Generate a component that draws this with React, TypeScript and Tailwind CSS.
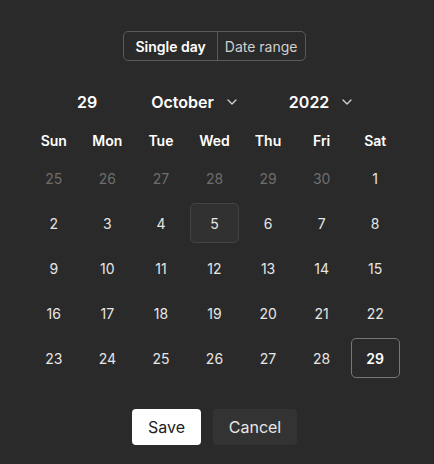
import React from "react";

const dayNames = ["Sun", "Mon", "Tue", "Wed", "Thu", "Fri", "Sat"];

const days: { n: number; muted?: boolean }[] = [
  { n: 25, muted: true },
  { n: 26, muted: true },
  { n: 27, muted: true },
  { n: 28, muted: true },
  { n: 29, muted: true },
  { n: 30, muted: true },
  ...Array.from({ length: 29 }, (_, i) => ({ n: i + 1 })),
];

const Chevron = () => (
  <svg width="10" height="6" viewBox="0 0 10 6" fill="none" className="text-[#d4d4d4]">
    <path d="M1 1l4 4 4-4" stroke="currentColor" strokeWidth="1.3" strokeLinecap="round" strokeLinejoin="round" />
  </svg>
);

const App = () => {
  return (
    <div
      className="w-[434px] h-[464px] bg-[#2a2a2a] pt-[31px] text-[#ececec]"
      style={{ fontFamily: "Inter, 'Noto Sans', sans-serif" }}
    >
      <div className="ml-[27px] w-[375px] flex flex-col">
        {/* mode toggle */}
        <div className="flex justify-center">
          <div className="flex h-[30px] rounded-[5px] border border-[#5a5a5a] text-[14px] overflow-hidden">
            <button className="px-[11px] font-semibold text-white border-r border-[#5a5a5a]">
              Single day
            </button>
            <button className="px-[7px] text-[#d0d0d0]">Date range</button>
          </div>
        </div>

        {/* day / month / year */}
        <div className="mt-[29px] h-6 flex items-center text-[16px] font-semibold text-white">
          <span className="ml-[50px]">29</span>
          <span className="ml-[54px] flex items-center gap-[13px]">
            October <Chevron />
          </span>
          <span className="ml-[52px] flex items-center gap-[13px]">
            2022 <Chevron />
          </span>
        </div>

        {/* weekday names */}
        <div className="mt-[16px] grid grid-cols-7 h-5 items-center text-[14px] font-semibold text-white">
          {dayNames.map((d) => (
            <span key={d} className="text-center">
              {d}
            </span>
          ))}
        </div>

        {/* days */}
        <div className="mt-[8px] grid grid-cols-7 gap-y-[5px] text-[14px]">
          {days.map((d, i) => {
            const isToday = !d.muted && d.n === 5;
            const isSelected = !d.muted && d.n === 29;
            return (
              <div key={i} className="flex justify-center">
                <div
                  className={`w-[49px] h-[40px] flex items-center justify-center rounded-[5px] ${
                    d.muted
                      ? "text-[#6e6e6e]"
                      : isSelected
                      ? "border border-[#777] font-semibold text-white"
                      : isToday
                      ? "bg-[#313131] border border-[#434343] text-[#e6e6e6]"
                      : "text-[#e6e6e6]"
                  }`}
                >
                  {d.n}
                </div>
              </div>
            );
          })}
        </div>

        {/* actions */}
        <div className="mt-[31px] flex justify-center gap-3 text-[16px]">
          <button className="w-[69px] h-9 rounded-[4px] bg-white text-[#222]">Save</button>
          <button className="w-[84px] h-9 rounded-[4px] bg-[#333333] text-[#e6e6e6]">
            Cancel
          </button>
        </div>
      </div>
    </div>
  );
};

export default App;
